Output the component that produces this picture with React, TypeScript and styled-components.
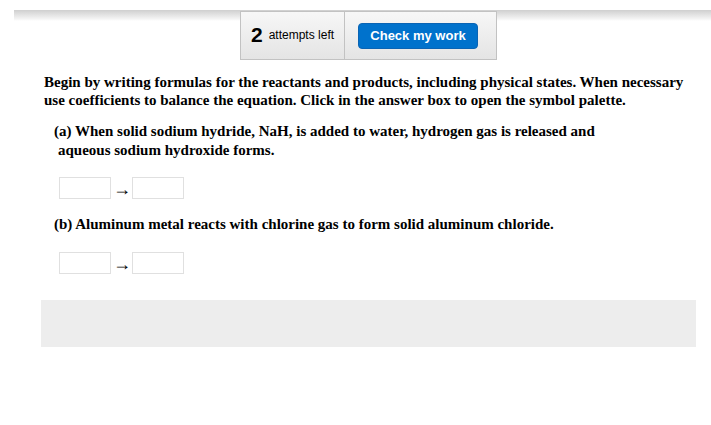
import React from "react";
import styled, { createGlobalStyle } from "styled-components";

const Global = createGlobalStyle`
  html, body { margin: 0; padding: 0; background: #fff; }
  body { font-family: "Liberation Serif", "Times New Roman", serif; color: #000; }
`;

const Page = styled.div`
  width: 711px;
  height: 425px;
  padding-top: 10px;
  box-sizing: border-box;
`;

const TopStrip = styled.div`
  margin-left: 14px;
  height: 50px;
  display: flex;
  justify-content: flex-start;
  background: linear-gradient(to bottom, #cfcfcf 0px, #f4f4f4 9px, #fff 11px, #fff 100%);
  background-repeat: no-repeat;
`;

const ToolBox = styled.div`
  margin-left: 226px;
  margin-top: 1px;
  height: 47px;
  display: flex;
  border: 1px solid #c2c2c2;
  background: linear-gradient(to bottom, #f7f7f7, #e4e4e4);
  box-sizing: content-box;
`;

const Attempts = styled.div`
  width: 104px;
  display: flex;
  align-items: center;
  padding-left: 10px;
  box-sizing: border-box;
  gap: 6px;
  border-right: 1px solid #c2c2c2;
  font-family: "Liberation Sans", Arial, sans-serif;
  padding-bottom: 2px;
`;

const Count = styled.span`
  font-size: 21px;
  font-weight: bold;
`;

const Label = styled.span`
  font-size: 12px;
`;

const CheckCell = styled.div`
  width: 151px;
  display: flex;
  align-items: flex-start;
  padding-left: 13px;
  padding-top: 11px;
  box-sizing: border-box;
`;

const CheckButton = styled.button`
  width: 120px;
  height: 26px;
  border: 1px solid #0a64b4;
  border-radius: 4px;
  background: #0072cc;
  color: #fff;
  font-family: "Liberation Sans", Arial, sans-serif;
  font-weight: bold;
  font-size: 13px;
  padding: 0;
  padding-bottom: 1px;
  cursor: pointer;
`;

const Content = styled.div`
  padding-left: 44px;
  padding-top: 13px;
`;

const Intro = styled.p`
  margin: 0;
  font-weight: bold;
  font-size: 15px;
  line-height: 18px;
  width: 650px;
`;

const Question = styled.p`
  margin: 0;
  padding-left: 10px;
  font-weight: bold;
  font-size: 15px;
  line-height: 19px;
  width: 600px;
`;

const Indent = styled.span`
  padding-left: 4px;
`;

const Equation = styled.div`
  display: flex;
  align-items: center;
  padding-left: 15px;
`;

const AnswerBox = styled.div`
  width: 50px;
  height: 20px;
  border: 1px solid #e0e0e0;
  background: #fff;
`;

const Arrow = styled.span`
  font-family: "Liberation Serif", "Times New Roman", serif;
  font-size: 18px;
  line-height: 20px;
  width: 14px;
  margin: 0 3px 0 4px;
  display: flex;
  justify-content: center;
  padding-top: 2px;
`;

const Gap = styled.div<{ h: number }>`
  height: ${(p) => p.h}px;
`;

const Panel = styled.div`
  margin-left: 41px;
  width: 655px;
  height: 47px;
  background: #ededed;
`;

export default function App() {
  return (
    <Page>
      <Global />
      <TopStrip>
        <ToolBox>
          <Attempts>
            <Count>2</Count>
            <Label>attempts left</Label>
          </Attempts>
          <CheckCell>
            <CheckButton>Check my work</CheckButton>
          </CheckCell>
        </ToolBox>
      </TopStrip>
      <Content>
        <Intro>
          Begin by writing formulas for the reactants and products, including physical states. When necessary
          use coefficients to balance the equation. Click in the answer box to open the symbol palette.
        </Intro>
        <Gap h={13} />
        <Question>
          (a) When solid sodium hydride, NaH, is added to water, hydrogen gas is released and
          <br />
          <Indent>aqueous sodium hydroxide forms.</Indent>
        </Question>
        <Gap h={17} />
        <Equation>
          <AnswerBox />
          <Arrow>→</Arrow>
          <AnswerBox />
        </Equation>
        <Gap h={16} />
        <Question>(b) Aluminum metal reacts with chlorine gas to form solid aluminum chloride.</Question>
        <Gap h={18} />
        <Equation>
          <AnswerBox />
          <Arrow>→</Arrow>
          <AnswerBox />
        </Equation>
      </Content>
      <Gap h={26} />
      <Panel />
    </Page>
  );
}
